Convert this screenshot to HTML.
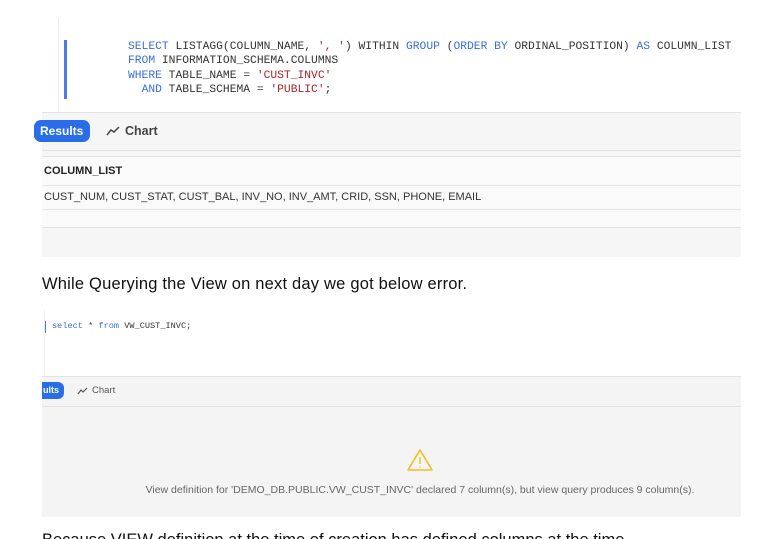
<!DOCTYPE html>
<html><head><style>
*{margin:0;padding:0;box-sizing:border-box}
body{width:768px;height:539px;background:#fff;position:relative;overflow:hidden;font-family:"Liberation Sans",sans-serif}
.a{position:absolute}
.code{font-family:"Liberation Mono",monospace;white-space:pre;color:#333}
.k{color:#3a6fd8}.s{color:#a8232a}
</style></head><body>
<div class="a" style="left:58px;top:18px;width:1px;height:94px;background:#eee"></div>
<div class="a" style="left:64px;top:40px;width:3px;height:59px;background:#4a7be8"></div>
<div class="a code" style="left:128px;top:40px;font-size:11.3px;line-height:14.4px"><span class="k">SELECT</span> LISTAGG(COLUMN_NAME, <span class="s">', '</span>) WITHIN <span class="k">GROUP</span> (<span class="k">ORDER BY</span> ORDINAL_POSITION) <span class="k">AS</span> COLUMN_LIST
<span class="k">FROM</span> INFORMATION_SCHEMA.COLUMNS
<span class="k">WHERE</span> TABLE_NAME = <span class="s">'CUST_INVC'</span>
  <span class="k">AND</span> TABLE_SCHEMA = <span class="s">'PUBLIC'</span>;</div>
<div class="a" style="left:42px;top:112px;width:699px;height:145px;background:#f6f6f6;border-top:1px solid #e2e2e2"></div>
<div class="a" style="left:34px;top:120px;width:56px;height:22px;background:#2a6de8;border-radius:7px;color:#fff;font-size:12px;font-weight:bold;line-height:22px;padding-left:6px">Results</div>
<svg class="a" style="left:106px;top:126px" width="14" height="10" viewBox="0 0 14 10"><path d="M1 9 L5 4 L8 6 L13 1" fill="none" stroke="#444" stroke-width="1.5"/></svg>
<div class="a" style="left:125px;top:124px;font-size:12.5px;color:#444;font-weight:bold">Chart</div>
<div class="a" style="left:42px;top:150px;width:699px;height:1px;background:#e2e2e2"></div>
<div class="a" style="left:42px;top:156px;width:699px;height:72px;background:#fafafa;border-top:1px solid #e2e2e2"></div>
<div class="a" style="left:44px;top:165px;font-size:11px;font-weight:bold;color:#222">COLUMN_LIST</div>
<div class="a" style="left:42px;top:185px;width:699px;height:1px;background:#e6e6e6"></div>
<div class="a" style="left:44px;top:191px;font-size:11px;color:#333">CUST_NUM, CUST_STAT, CUST_BAL, INV_NO, INV_AMT, CRID, SSN, PHONE, EMAIL</div>
<div class="a" style="left:42px;top:209px;width:699px;height:1px;background:#e6e6e6"></div>
<div class="a" style="left:42px;top:227px;width:699px;height:1px;background:#e2e2e2"></div>
<div class="a" style="left:42px;top:275px;font-size:16.5px;color:#111;letter-spacing:0.2px">While Querying the View on next day we got below error.</div>
<div class="a" style="left:44px;top:321px;width:2px;height:12px;background:#4a7be8"></div>
<div class="a code" style="left:52px;top:321px;font-size:8.6px"><span class="k">select</span> * <span class="k">from</span> VW_CUST_INVC;</div>
<div class="a" style="left:44px;top:310px;width:1px;height:66px;background:#f0f0f0"></div>
<div class="a" style="left:42px;top:376px;width:699px;height:141px;background:#f4f4f4;border-top:1px solid #e2e2e2"></div>
<div class="a" style="left:42px;top:382px;width:22px;height:17px;background:#2a6de8;border-radius:0 6px 6px 0;color:#fff;font-size:9px;font-weight:bold;line-height:17px;overflow:hidden;padding-left:1px">ults</div>
<svg class="a" style="left:77px;top:387px" width="11" height="8" viewBox="0 0 11 8"><path d="M1 7 L4 3 L6 5 L10 1" fill="none" stroke="#555" stroke-width="1.2"/></svg>
<div class="a" style="left:92px;top:385px;font-size:9.5px;color:#555">Chart</div>
<div class="a" style="left:42px;top:406px;width:699px;height:1px;background:#e2e2e2"></div>
<svg class="a" style="left:406px;top:448px" width="28" height="24" viewBox="0 0 28 24"><path d="M14 2 L26 22 L2 22 Z" fill="none" stroke="#f0c020" stroke-width="1.6" stroke-linejoin="round"/><path d="M14 9 V16 M14 18.5 V19.5" stroke="#f0c020" stroke-width="1.4"/></svg>
<div class="a" style="left:42px;top:484px;width:756px;text-align:center;font-size:10.5px;color:#666">View definition for 'DEMO_DB.PUBLIC.VW_CUST_INVC' declared 7 column(s), but view query produces 9 column(s).</div>
<div class="a" style="left:42px;top:531px;width:700px;height:8px;overflow:hidden"><div style="font-size:16.5px;color:#111;white-space:nowrap">Because VIEW definition at the time of creation has defined columns at the time</div></div>
</body></html>
